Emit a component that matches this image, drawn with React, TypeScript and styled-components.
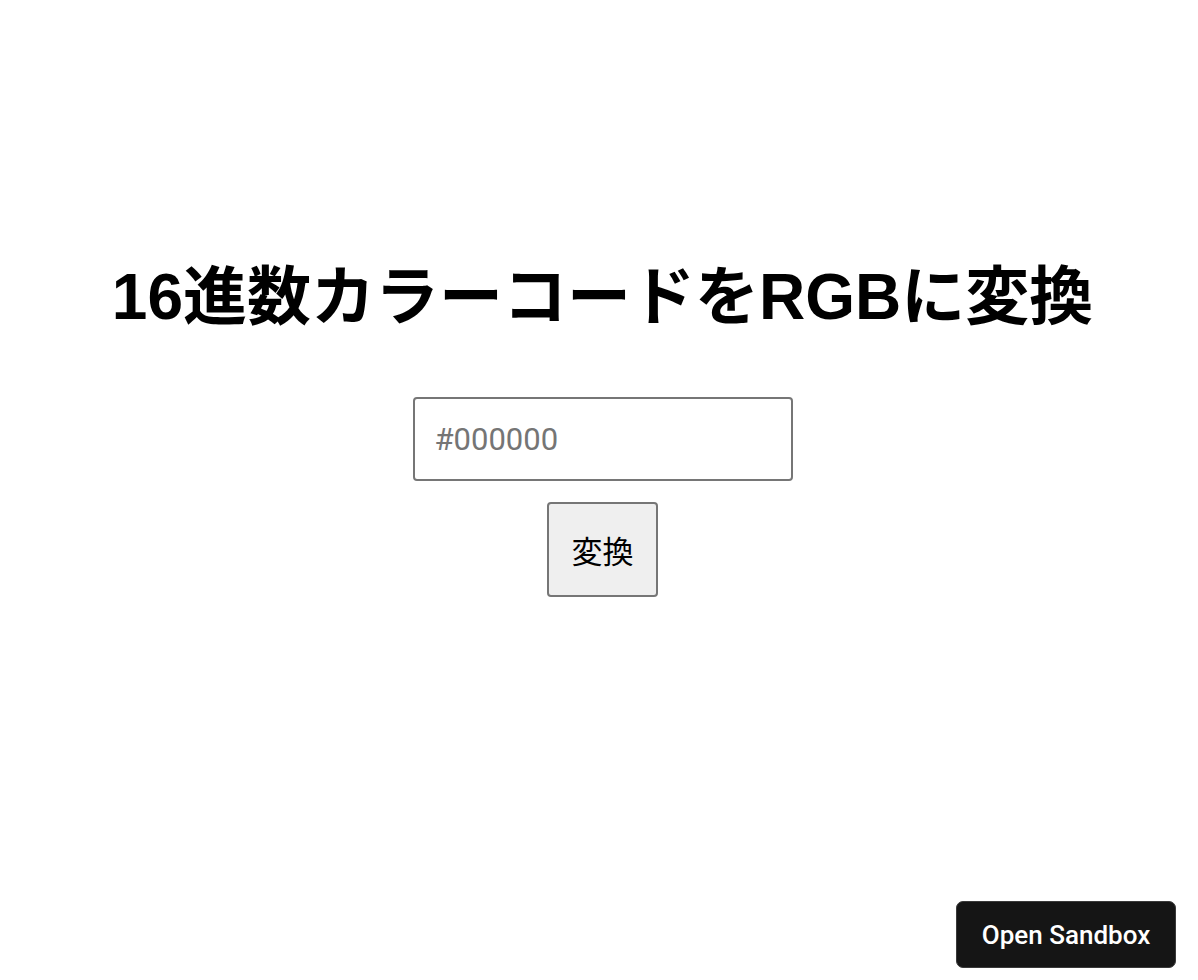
import styled, { createGlobalStyle } from "styled-components";

const GlobalStyle = createGlobalStyle`
  html, body {
    margin: 0;
    padding: 0;
    background: #ffffff;
  }
`;

function App() {
  return (
    <>
      <GlobalStyle />
      <Page>
        <Title>16進数カラーコードをRGBに変換</Title>
        <HexInput type="text" placeholder="#000000" />
        <ConvertButton type="button">変換</ConvertButton>
      </Page>
      <SandboxButton type="button">Open Sandbox</SandboxButton>
    </>
  );
}

const Page = styled.div`
  display: flex;
  flex-direction: column;
  align-items: center;
  padding: 255px 0 0 7px;
  font-family: "Liberation Sans", "Noto Sans CJK JP", sans-serif;
`;

const Title = styled.h1`
  margin: 0 0 58px;
  font-size: 64px;
  font-weight: 700;
  line-height: 84px;
  color: #000;
  font-family: "Liberation Sans", "Noto Sans CJK JP", sans-serif;
`;

const HexInput = styled.input`
  box-sizing: border-box;
  width: 380px;
  height: 84px;
  padding: 0 20px;
  border: 2px solid #767676;
  border-radius: 4px;
  font-size: 31px;
  font-family: Roboto, "Noto Sans CJK JP", sans-serif;
  color: #000;
  outline: none;

  &::placeholder {
    color: #757575;
  }
`;

const ConvertButton = styled.button`
  box-sizing: border-box;
  margin-top: 21px;
  width: 111px;
  height: 95px;
  border: 2px solid #767676;
  border-radius: 4px;
  background: #efefef;
  font-size: 31px;
  font-family: "Noto Sans CJK JP", sans-serif;
  color: #000;
  cursor: pointer;
`;

const SandboxButton = styled.button`
  position: fixed;
  right: 22px;
  bottom: 12px;
  box-sizing: border-box;
  width: 220px;
  height: 67px;
  border: 1px solid #3a3a3a;
  border-radius: 7px;
  background: #151515;
  color: #ffffff;
  font-family: Roboto, sans-serif;
  font-weight: 500;
  font-size: 26px;
  cursor: pointer;
`;

export default App;
